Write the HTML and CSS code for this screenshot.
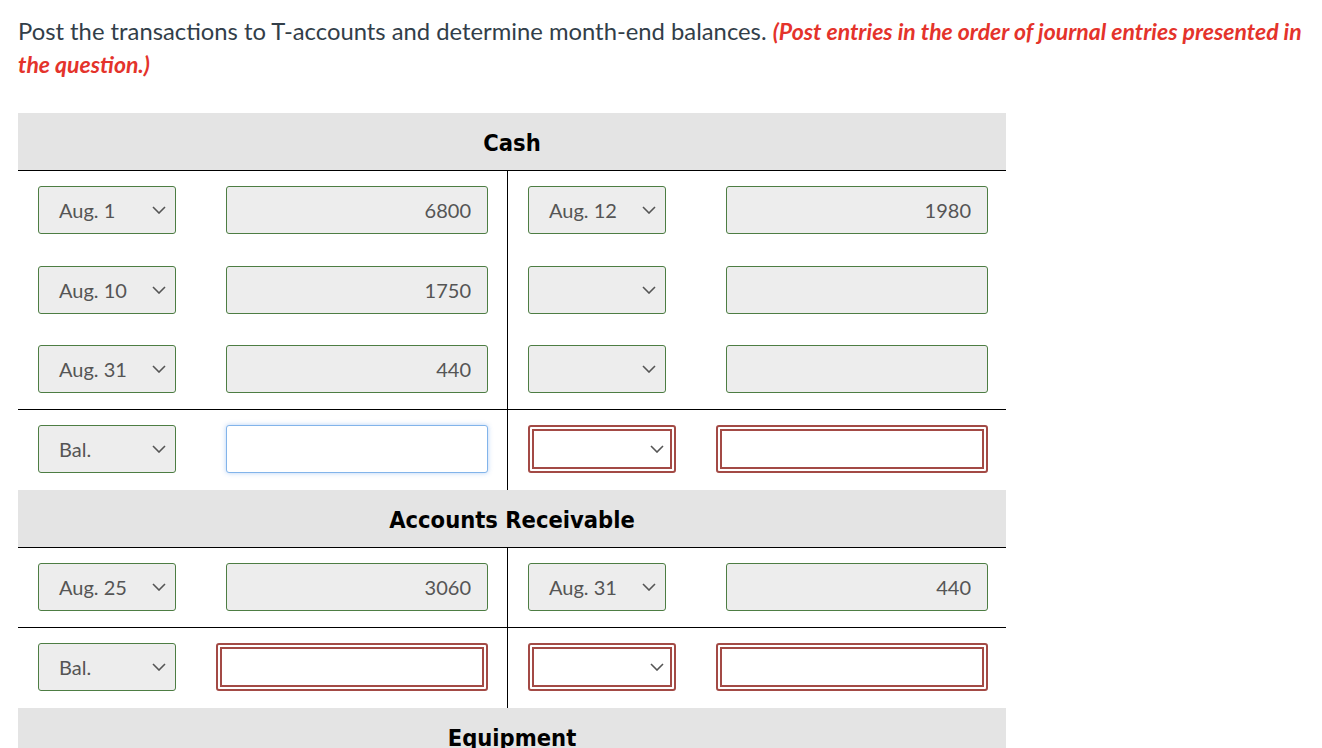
FILE: index.html
```html
<!DOCTYPE html>
<html lang="en">

<head>
    <meta charset="UTF-8">
    <meta name="viewport" content="width=device-width, initial-scale=1.0">
    <title>T-accounts</title>
    <link rel="stylesheet" href="styles.css">
</head>

<body>
    <!-- 문제 -->
    <p class="qtxt">Post the transactions to T-accounts and determine month-end balances. <em class="hint">(Post entries in the order of journal entries presented in the question.)</em></p>

    <!-- Cash -->
    <section class="tacc">
        <h3 class="tacc-tit">Cash</h3>
        <div class="tgrid">
            <div class="cell dr">
                <div class="row">
                    <div class="sel"><span>Aug. 1</span><svg viewBox="0 0 14 8"><polyline points="1,1 7,7 13,1" /></svg></div>
                    <input class="amt" type="text" value="6800" readonly>
                </div>
                <div class="row">
                    <div class="sel"><span>Aug. 10</span><svg viewBox="0 0 14 8"><polyline points="1,1 7,7 13,1" /></svg></div>
                    <input class="amt" type="text" value="1750" readonly>
                </div>
                <div class="row">
                    <div class="sel"><span>Aug. 31</span><svg viewBox="0 0 14 8"><polyline points="1,1 7,7 13,1" /></svg></div>
                    <input class="amt" type="text" value="440" readonly>
                </div>
            </div>
            <div class="cell cr">
                <div class="row">
                    <div class="sel"><span>Aug. 12</span><svg viewBox="0 0 14 8"><polyline points="1,1 7,7 13,1" /></svg></div>
                    <input class="amt" type="text" value="1980" readonly>
                </div>
                <div class="row">
                    <div class="sel"><span></span><svg viewBox="0 0 14 8"><polyline points="1,1 7,7 13,1" /></svg></div>
                    <input class="amt" type="text" value="" readonly>
                </div>
                <div class="row">
                    <div class="sel"><span></span><svg viewBox="0 0 14 8"><polyline points="1,1 7,7 13,1" /></svg></div>
                    <input class="amt" type="text" value="" readonly>
                </div>
            </div>
            <!-- 잔액 -->
            <div class="cell dr bal">
                <div class="row">
                    <div class="sel"><span>Bal.</span><svg viewBox="0 0 14 8"><polyline points="1,1 7,7 13,1" /></svg></div>
                    <input class="amt focus" type="text" value="">
                </div>
            </div>
            <div class="cell cr bal">
                <div class="row">
                    <div class="sel err"><span></span><svg viewBox="0 0 14 8"><polyline points="1,1 7,7 13,1" /></svg></div>
                    <input class="amt err" type="text" value="">
                </div>
            </div>
        </div>
    </section>

    <!-- Accounts Receivable -->
    <section class="tacc">
        <h3 class="tacc-tit">Accounts Receivable</h3>
        <div class="tgrid">
            <div class="cell dr">
                <div class="row">
                    <div class="sel"><span>Aug. 25</span><svg viewBox="0 0 14 8"><polyline points="1,1 7,7 13,1" /></svg></div>
                    <input class="amt" type="text" value="3060" readonly>
                </div>
            </div>
            <div class="cell cr">
                <div class="row">
                    <div class="sel"><span>Aug. 31</span><svg viewBox="0 0 14 8"><polyline points="1,1 7,7 13,1" /></svg></div>
                    <input class="amt" type="text" value="440" readonly>
                </div>
            </div>
            <div class="cell dr bal">
                <div class="row">
                    <div class="sel"><span>Bal.</span><svg viewBox="0 0 14 8"><polyline points="1,1 7,7 13,1" /></svg></div>
                    <input class="amt err" type="text" value="">
                </div>
            </div>
            <div class="cell cr bal">
                <div class="row">
                    <div class="sel err"><span></span><svg viewBox="0 0 14 8"><polyline points="1,1 7,7 13,1" /></svg></div>
                    <input class="amt err" type="text" value="">
                </div>
            </div>
        </div>
    </section>

    <!-- Equipment -->
    <section class="tacc">
        <h3 class="tacc-tit">Equipment</h3>
    </section>
</body>

</html>
```

FILE: styles.css
```css
html,
body {
    margin: 0;
    padding: 0;
}

body {
    background-color: #fff;
    font-family: Lato, "Liberation Sans", sans-serif;
}

/* 문제글 */
.qtxt {
    margin: 0;
    padding: 15px 18px 0;
    font-size: 23.8px;
    line-height: 33px;
    color: #323e49;
}

.hint {
    font-size: 23px;
    font-weight: bold;
    color: #e4332b;
}

/* T계정 박스 */
.tacc {
    width: 988px;
    margin: 32px 0 0 18px;
}

.tacc + .tacc {
    margin-top: 0;
}

/* 계정명 띠 */
.tacc-tit {
    margin: 0;
    height: 58px;
    padding-top: 3px;
    box-sizing: border-box;
    line-height: 54px;
    background-color: #e4e4e4;
    border-bottom: 1px solid #000;
    text-align: center;
    font-family: "DejaVu Sans Condensed", "DejaVu Sans", sans-serif;
    font-size: 23.5px;
    font-weight: bold;
    color: #000;
}

/* 차변/대변 2칸 */
.tgrid {
    display: grid;
    grid-template-columns: 490px 1fr;
}

.cell {
    display: flex;
    flex-direction: column;
    gap: 31.5px;
    padding: 15px 18px 16px 20px;
}

/* 가운데 세로선 */
.cell.dr {
    border-right: 1px solid #000;
    padding-right: 19px;
}

/* 잔액줄 위 가로선 */
.cell.bal {
    border-top: 1px solid #000;
    padding-bottom: 17px;
}

.row {
    display: flex;
    justify-content: space-between;
    align-items: center;
}

/* 날짜 드롭다운 */
.sel {
    display: flex;
    align-items: center;
    box-sizing: border-box;
    width: 138px;
    height: 48px;
    padding-left: 20px;
    border: 1px solid #4d7d43;
    border-radius: 3px;
    background-color: #ededed;
    font-size: 20px;
    color: #555;
}

.sel span {
    flex: 1;
}

.sel svg {
    width: 14px;
    height: 8px;
    margin-right: 9px;
    fill: none;
    stroke: #555;
    stroke-width: 1.6;
}

/* 금액칸 */
.amt {
    box-sizing: border-box;
    width: 262px;
    height: 48px;
    margin: 0;
    padding: 0 16px 0 10px;
    border: 1px solid #4d7d43;
    border-radius: 3px;
    background-color: #ededed;
    font-family: Lato, "Liberation Sans", sans-serif;
    font-size: 20px;
    color: #555;
    text-align: right;
    outline: none;
}

/* 입력중(파란) */
.amt.focus {
    border-color: #82b4ea;
    background-color: #fff;
    box-shadow: 0 0 5px rgba(90, 150, 230, .45);
}

/* 오답(빨간 이중선) */
.err {
    border: 6px double #a34a45;
    border-radius: 3px;
    background-color: #fff;
}

.sel.err {
    width: 148px;
}

.sel.err svg {
    margin-right: 6px;
}

.amt.err {
    width: 272px;
}
```
